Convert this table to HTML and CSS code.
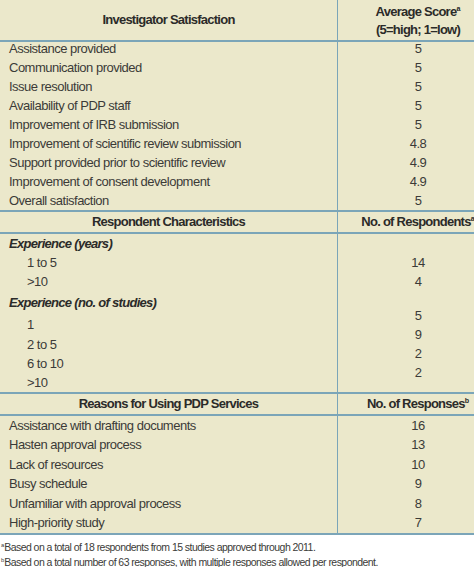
FILE: index.html
```html
<!DOCTYPE html>
<html>
<head>
<meta charset="utf-8">
<link rel="stylesheet" href="styles.css">
</head>
<body>
<div class="page">
  <div class="table">
    <div class="hrow tall">
      <div class="lc hc"><span>Investigator Satisfaction</span></div>
      <div class="rc hc"><span>Average Score<sup>a</sup><br>(5=high; 1=low)</span></div>
    </div>
    <div class="sec s1">
      <div class="row"><div class="lc">Assistance provided</div><div class="rc">5</div></div>
      <div class="row"><div class="lc">Communication provided</div><div class="rc">5</div></div>
      <div class="row"><div class="lc">Issue resolution</div><div class="rc">5</div></div>
      <div class="row"><div class="lc">Availability of PDP staff</div><div class="rc">5</div></div>
      <div class="row"><div class="lc">Improvement of IRB submission</div><div class="rc">5</div></div>
      <div class="row"><div class="lc">Improvement of scientific review submission</div><div class="rc">4.8</div></div>
      <div class="row"><div class="lc">Support provided prior to scientific review</div><div class="rc">4.9</div></div>
      <div class="row"><div class="lc">Improvement of consent development</div><div class="rc">4.9</div></div>
      <div class="row"><div class="lc">Overall satisfaction</div><div class="rc">5</div></div>
    </div>
    <div class="hrow">
      <div class="lc hc"><span>Respondent Characteristics</span></div>
      <div class="rc hc"><span>No. of Respondents<sup>a</sup></span></div>
    </div>
    <div class="block">
      <div class="lc">
        <div class="ln cat">Experience (years)</div>
        <div class="ln ind">1 to 5</div>
        <div class="ln ind">&gt;10</div>
        <div class="ln cat g2">Experience (no. of studies)</div>
        <div class="ln ind g3">1</div>
        <div class="ln ind g1">2 to 5</div>
        <div class="ln ind">6 to 10</div>
        <div class="ln ind">&gt;10</div>
      </div>
      <div class="rc stack">
        <div class="ln">14</div>
        <div class="ln">4</div>
        <div class="ln g15">5</div>
        <div class="ln">9</div>
        <div class="ln">2</div>
        <div class="ln">2</div>
      </div>
    </div>
    <div class="hrow">
      <div class="lc hc"><span>Reasons for Using PDP Services</span></div>
      <div class="rc hc"><span>No. of Responses<sup>b</sup></span></div>
    </div>
    <div class="sec s3">
      <div class="row"><div class="lc">Assistance with drafting documents</div><div class="rc">16</div></div>
      <div class="row"><div class="lc">Hasten approval process</div><div class="rc">13</div></div>
      <div class="row"><div class="lc">Lack of resources</div><div class="rc">10</div></div>
      <div class="row"><div class="lc">Busy schedule</div><div class="rc">9</div></div>
      <div class="row"><div class="lc">Unfamiliar with approval process</div><div class="rc">8</div></div>
      <div class="row"><div class="lc">High-priority study</div><div class="rc">7</div></div>
    </div>
  </div>
  <div class="notes">
    <p><sup>a</sup>Based on a total of 18 respondents from 15 studies approved through 2011.</p>
    <p><sup>b</sup>Based on a total number of 63 responses, with multiple responses allowed per respondent.</p>
  </div>
</div>
</body>
</html>
```

FILE: styles.css
```css
* { box-sizing: border-box; }
html, body {
  margin: 0;
  padding: 0;
  background: #ffffff;
}
.page {
  width: 474px;
  height: 567px;
  overflow: hidden;
  font-family: "Liberation Sans", Arial, sans-serif;
  color: #3b3b38;
}
.table {
  width: 498px;
  background: #ebe8cb;
  font-size: 13px;
  letter-spacing: -0.5px;
  border-bottom: 2px solid #7ba5b8;
}
.hrow, .row, .block {
  display: grid;
  grid-template-columns: 338px 160px;
}
.lc {
  border-right: 1.5px solid #7ba5b8;
  padding-left: 9px;
  text-align: left;
  white-space: nowrap;
}
.rc {
  text-align: center;
  white-space: nowrap;
}
.hrow {
  height: 24px;
  border-top: 2px solid #7ba5b8;
  border-bottom: 2px solid #7ba5b8;
  font-weight: bold;
  color: #2b2b29;
  letter-spacing: -0.75px;
}
.hc {
  display: flex;
  align-items: center;
  justify-content: center;
  padding-left: 0;
  line-height: 18px;
  text-align: center;
}
.hrow.tall {
  height: 42px;
  border-top: 0;
}
.hrow.tall .rc { padding-top: 1px; }
.hrow sup, .notes sup {
  font-size: 0.55em;
  vertical-align: 0.75em;
  line-height: 0;
  letter-spacing: 0;
}
.s1 .row {
  height: 19px;
  line-height: 13px;
}
.s1 .row:last-child { height: 16px; }
.s3 .row {
  height: 19.4px;
  line-height: 19px;
}
.s3 .row:last-child { height: 20.4px; }
.ln {
  height: 19px;
  line-height: 19px;
}
.cat {
  font-style: italic;
  font-weight: bold;
  letter-spacing: -0.7px;
  color: #2b2b29;
}
.ind { padding-left: 18px; }
.g1 { margin-top: 1px; }
.g2 { margin-top: 2px; }
.g3 { margin-top: 3px; }
.stack { padding-top: 19px; }
.g15 { margin-top: 15px; }
.notes {
  padding-top: 5px;
  padding-left: 1px;
  font-size: 10.5px;
  letter-spacing: -0.55px;
  color: #3b3b38;
}
.notes p {
  margin: 0;
  line-height: 15px;
  white-space: nowrap;
}
```
